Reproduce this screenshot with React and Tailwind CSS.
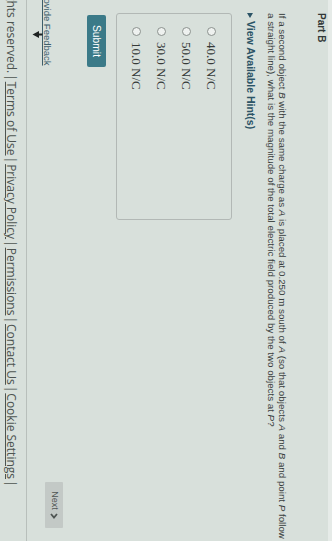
import React from 'react';

const options = ['40.0', '50.0', '30.0', '10.0'];
const footerLinks = ['Terms of Use', 'Privacy Policy', 'Permissions', 'Contact Us', 'Cookie Settings'];

const Chevron = () => (
  <svg width="6" height="8" viewBox="0 0 6 8" className="ml-[3px]">
    <path d="M1 1l3.5 3L1 7" fill="none" stroke="currentColor" strokeWidth="1.8" />
  </svg>
);

export default function App() {
  return (
    <div className="relative w-[332px] h-[541px] overflow-hidden bg-[#d8e0db]">
      {/* photo of the screen was taken sideways, so the page is turned a quarter */}
      <div className="absolute top-0 left-[332px] w-[541px] h-[332px] origin-top-left rotate-90 flex flex-col bg-[#d8e0db] font-['Liberation_Sans',Arial,sans-serif] text-[#3a3f3e]">
        <div className="h-[4px] bg-[#e6ebe8]" />

        <div className="relative flex-1 flex flex-col pl-[13px]">
          <h2 className="mt-[1px] text-[10px] leading-[12px] font-bold text-[#333837]">Part B</h2>

          <p className="mt-[27px] text-[9.75px] leading-[11px] whitespace-nowrap">
            If a second object <i>B</i> with the same charge as <i>A</i> is placed at 0.250{' '}
            <span className="font-['Liberation_Serif',serif] text-[10.5px]">m</span> south of <i>A</i> (so that objects <i>A</i> and <i>B</i> and point <i>P</i> follow
            <br />
            a straight line), what is the magnitude of the total electric field produced by the two objects at <i>P</i>?
          </p>

          <div className="mt-[9px] flex items-center gap-[3px] text-[10.5px] leading-[13px] font-bold text-[#2c5466]">
            <span className="w-0 h-0 border-y-[3.5px] border-y-transparent border-l-[5px] border-l-[#2c5466]" />
            View Available Hint(s)
          </div>

          <div className="mt-[12px] w-[207px] h-[116px] rounded-[3px] border border-[#b2b8b5] pt-[7px] pl-[13px]">
            {options.map((o) => (
              <div key={o} className="h-[25px] flex items-center gap-[6px]">
                <span className="w-[9px] h-[9px] rounded-full border border-[#8b918e] bg-[#eef1ef]" />
                <span className="font-['Liberation_Serif',serif] text-[13px] leading-[14px] text-[#363a39]">
                  {o} N/C
                </span>
              </div>
            ))}
          </div>

          <button className="mt-[10px] ml-[2px] w-[52px] h-[19px] rounded-[2px] bg-[#3b7a88] text-white text-[10.3px] leading-[19px]">
            Submit
          </button>

          <div className="mt-[24px] flex justify-between items-start">
            <a className="mt-[10px] ml-[-24px] text-[9.5px] leading-[11px] text-[#3d5e6b] underline">Provide Feedback</a>
            <button className="mr-[13px] w-[46px] h-[18px] rounded-[1px] bg-[#c3c9c6] text-[#4f5553] text-[9px] flex items-center justify-center">
              Next
              <Chevron />
            </button>
          </div>

          <svg width="9" height="11" viewBox="0 0 9 11" className="absolute left-[30px] top-[285px]">
            <path d="M4.5 10.5L1 4h2.5V0.5h2V4H8z" fill="#1f2322" />
          </svg>
        </div>

        <footer className="h-[27px] border-t border-[#b8bfbb] pt-[6px] pl-[0px] flex whitespace-nowrap font-['Open_Sans',sans-serif] text-[12px] leading-[17px] text-[#4d5451]">
          <span className="ml-[-14px]">rights reserved.</span>
          {footerLinks.map((l) => (
            <React.Fragment key={l}>
              <span className="mx-[1px]">|</span>
              <a className="underline">{l}</a>
            </React.Fragment>
          ))}
          <span className="mx-[1px]">|</span>
        </footer>
      </div>
    </div>
  );
}
